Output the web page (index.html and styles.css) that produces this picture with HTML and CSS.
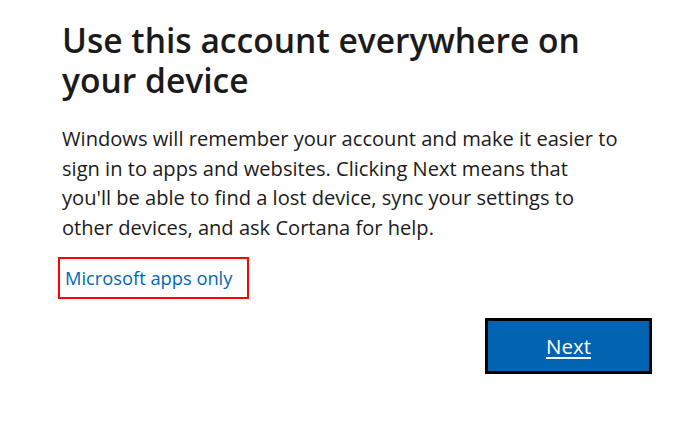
FILE: index.html
```html
<!DOCTYPE html>
<html lang="en">
<head>
<meta charset="utf-8">
<title>Use this account everywhere on your device</title>
<link rel="stylesheet" href="styles.css">
</head>
<body>
<main class="page">
  <h1 class="title">Use this account everywhere on your device</h1>
  <p class="desc">Windows will remember your account and make it easier to<br>sign in to apps and websites. Clicking Next means that<br>you'll be able to find a lost device, sync your settings to<br>other devices, and ask Cortana for help.</p>
  <div class="link-row">
    <a class="ms-link" href="#">Microsoft apps only</a>
  </div>
  <div class="actions">
    <button class="next-btn" type="button"><span>Next</span></button>
  </div>
</main>
</body>
</html>
```
FILE: styles.css
```css
html, body {
  margin: 0;
  padding: 0;
  background: #ffffff;
}
body {
  font-family: "Open Sans", "Noto Sans", "Liberation Sans", sans-serif;
  color: #1b1b1b;
}
.page {
  width: 590px;
  padding: 20px 0 0 62px;
  display: flex;
  flex-direction: column;
}
.title {
  margin: 0;
  width: 540px;
  font-size: 33.6px;
  line-height: 40px;
  font-weight: 600;
  color: #1b1b1b;
}
.desc {
  margin: 24px 0 0;
  font-size: 20.1px;
  line-height: 29.7px;
  font-weight: 400;
  white-space: nowrap;
}
.link-row {
  margin-top: 14px;
  margin-left: -4px;
  display: flex;
}
.ms-link {
  display: inline-block;
  box-sizing: border-box;
  width: 191px;
  height: 42px;
  border: 2px solid #ff0000;
  padding: 6px 0 0 5px;
  font-size: 18.3px;
  line-height: 26px;
  color: #0067b8;
  text-decoration: none;
}
.actions {
  display: flex;
  justify-content: flex-end;
  margin-top: 19px;
}
.next-btn {
  box-sizing: border-box;
  width: 167px;
  height: 56px;
  border: 3px solid #000000;
  background: #0063b1;
  color: #ffffff;
  font-family: inherit;
  font-size: 20.5px;
  padding: 0;
  margin-right: 0;
}
.next-btn span {
  text-decoration: underline;
  text-underline-offset: 3px;
}
```
